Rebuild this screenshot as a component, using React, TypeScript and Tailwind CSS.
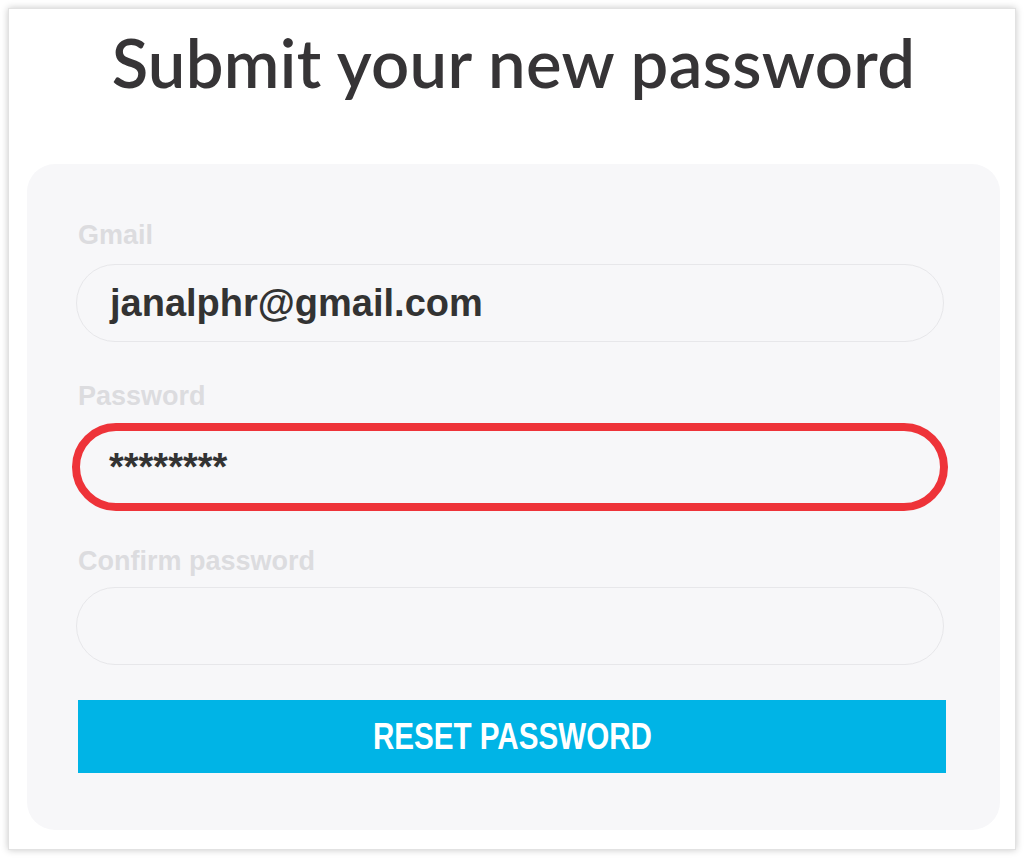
import React from "react";

const label = "block ml-[2px] text-[27px] leading-[31px] font-bold text-[#dcdcdf] [font-family:'Liberation_Sans',Arial,sans-serif]";
const field = "h-[78px] w-[868px] rounded-full border border-[#e7e7ea] bg-[#f7f7f9] flex items-center pl-[33px]";
const fieldText = "text-[38px] font-bold text-[#333333] [font-family:'Liberation_Sans',Arial,sans-serif]";

export default function App() {
  return (
    <div className="w-[1024px] h-[858px] bg-white p-[8px]">
      <div className="h-[842px] bg-white border border-[#e2e2e2] shadow-[0_0_7px_rgba(0,0,0,0.22)] pl-[18px] pr-[15px]">
        {/* Title */}
        <h1 className="pt-[13px] h-[155px] text-center text-[67px] leading-[80px] tracking-[0.3px] font-semibold text-[#363436] [font-family:Lato,'Noto_Sans',sans-serif]">
          Submit your new password
        </h1>

        {/* Form card */}
        <div className="h-[666px] rounded-[28px] bg-[#f7f7f9] pl-[49px] pt-[56px]">
          <label className={label}>Gmail</label>
          <div className={`${field} mt-[13px]`}>
            <span className={fieldText}>janalphr@gmail.com</span>
          </div>

          <label className={`${label} mt-[39px]`}>Password</label>
          <div className="mt-[11px] -ml-[4px] h-[88px] w-[876px] rounded-full border-[8px] border-[#ee3339] bg-[#f7f7f9] flex items-center pl-[29px]">
            <span className={fieldText}>********</span>
          </div>

          <label className={`${label} mt-[35px]`}>Confirm password</label>
          <div className={`${field} mt-[10px]`} />

          <button className="mt-[35px] ml-[2px] h-[73px] w-[868px] bg-[#00b4e6] flex items-center justify-center">
            <span className="inline-block scale-x-[0.8] text-[37px] font-bold text-white [font-family:'Liberation_Sans',Arial,sans-serif]">
              RESET PASSWORD
            </span>
          </button>
        </div>
      </div>
    </div>
  );
}
